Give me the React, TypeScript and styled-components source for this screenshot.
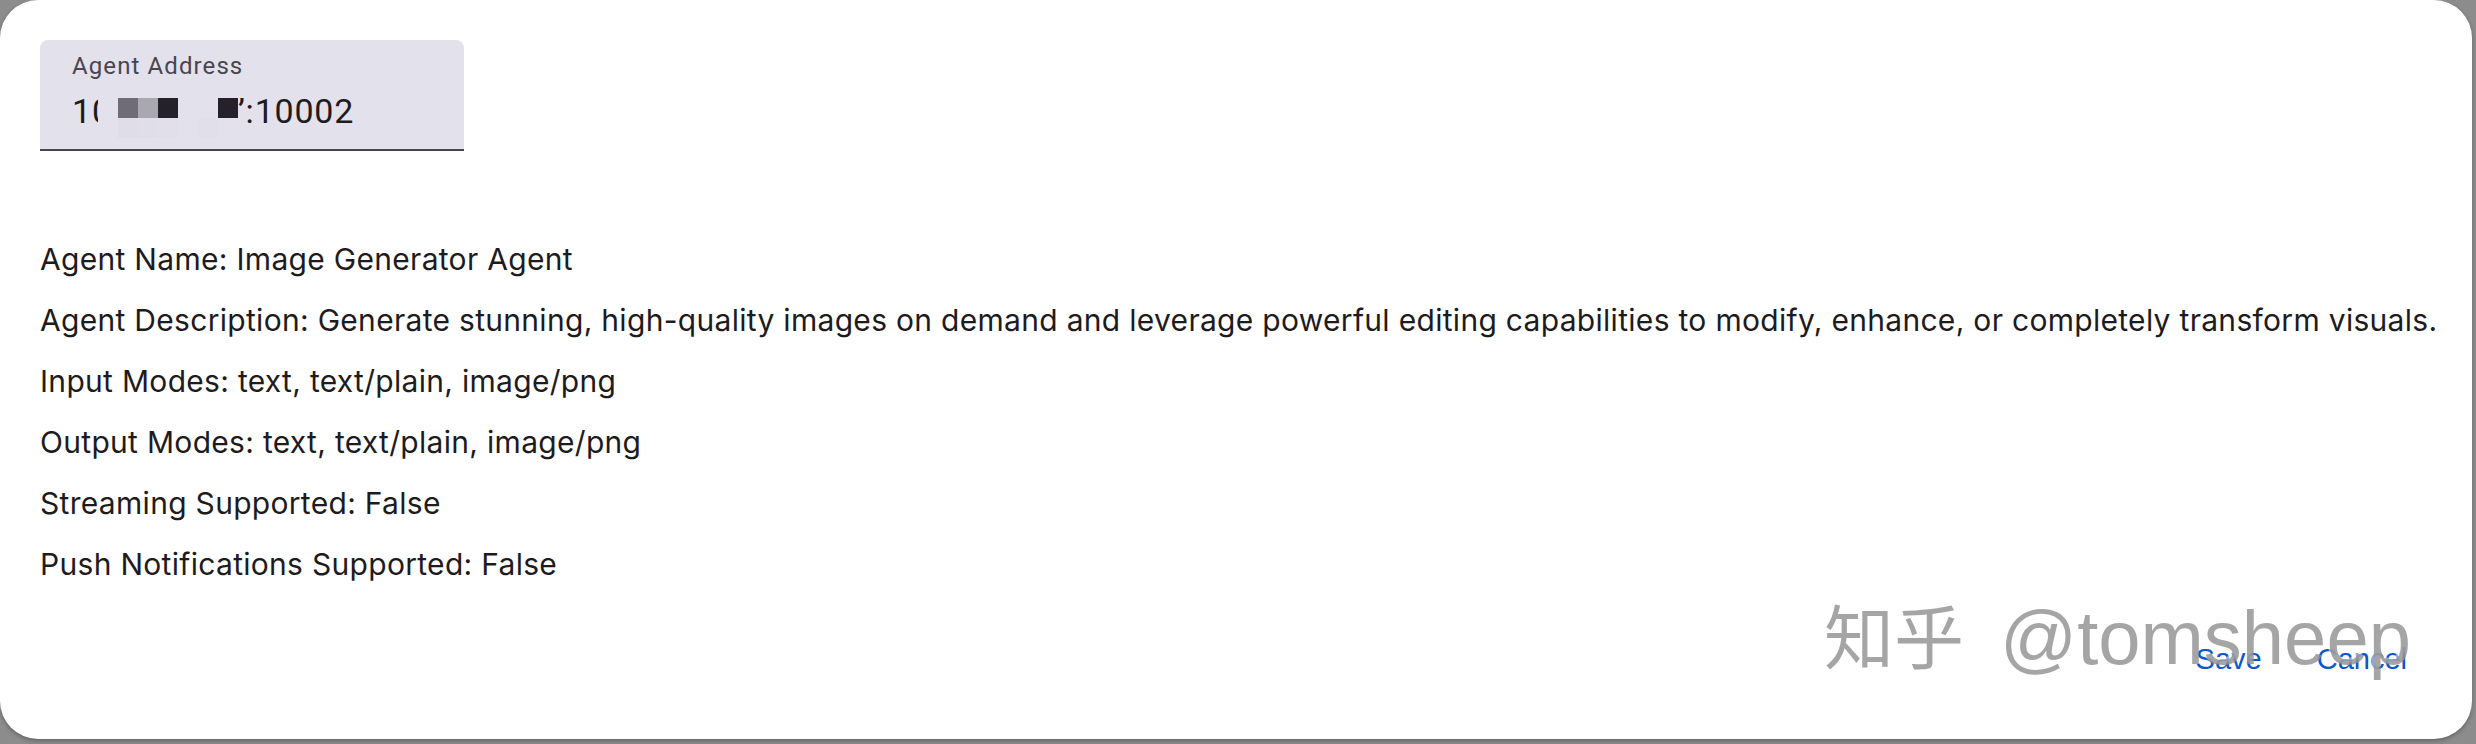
import styled, { createGlobalStyle } from "styled-components"

const GlobalStyle = createGlobalStyle`
  html, body {
    margin: 0;
    padding: 0;
    background: #8c8c8c;
  }

  body {
    width: 2476px;
    height: 744px;
    overflow: hidden;
  }
`

const Dialog = styled.div`
  position: relative;
  box-sizing: border-box;
  display: flex;
  flex-direction: column;
  width: 2472px;
  height: 739px;
  padding: 40px 65px 64px 40px;
  border-radius: 38px;
  background: #ffffff;
  box-shadow: 0 2px 4px rgba(0, 0, 0, 0.28);
`

const Field = styled.div`
  box-sizing: border-box;
  display: flex;
  flex-direction: column;
  width: 424px;
  height: 111px;
  padding: 10px 32px 0;
  border-radius: 8px 8px 0 0;
  border-bottom: 2px solid #49454f;
  background: #e3e1ec;
  font-family: Roboto, "Liberation Sans", sans-serif;
`

const FieldLabel = styled.span`
  font-size: 24px;
  line-height: 32px;
  letter-spacing: 1.1px;
  color: #49454f;
`

const FieldValue = styled.div`
  display: flex;
  align-items: flex-start;
  margin-top: 9px;
  font-size: 34px;
  line-height: 40px;
  letter-spacing: 0.8px;
  color: #1d1b20;
`

const ClippedText = styled.span<{ $width: number }>`
  display: inline-block;
  width: ${(p) => p.$width}px;
  overflow: hidden;
  white-space: nowrap;
`

// pixelated redaction over the middle of the address
const Mosaic = styled.span`
  display: grid;
  grid-template-columns: repeat(6, 20px);
  grid-auto-rows: 20px;
  margin: 7px 0 0 20px;
`

const MosaicCell = styled.span<{ $tone: string }>`
  background: ${(p) => p.$tone};
`

const Details = styled.div`
  display: flex;
  flex-direction: column;
  gap: 21px;
  margin-top: 88px;
  font-family: Inter, Roboto, "Liberation Sans", sans-serif;
  font-size: 30px;
  line-height: 40px;
  letter-spacing: 0.3px;
  color: #1d1b20;
`

const DetailLine = styled.div`
  white-space: nowrap;
`

const Actions = styled.div`
  display: flex;
  justify-content: flex-end;
  gap: 55px;
  margin-top: auto;
`

const TextButton = styled.button`
  padding: 0;
  border: none;
  background: none;
  font-family: "Liberation Sans", Arial, sans-serif;
  font-size: 29px;
  line-height: 32px;
  color: #0b57d0;
  cursor: pointer;
`

const Watermark = styled.div`
  position: absolute;
  left: 1824px;
  top: 600px;
  display: flex;
  align-items: baseline;
  gap: 36px;
  color: rgba(145, 145, 145, 0.82);
  text-shadow: -2px -2px 0 rgba(255, 255, 255, 0.5);
  pointer-events: none;
  white-space: nowrap;
`

const WatermarkText = styled.span<{ $size: number }>`
  font-family: "Liberation Sans", "Noto Sans CJK SC", sans-serif;
  font-size: ${(p) => p.$size}px;
  line-height: 1;
`

const mosaicTones = [
  "#6f6c78",
  "#a9a7b0",
  "#24212a",
  "#e3e1ec",
  "#e3e1ec",
  "#24212a",
  "#dfdde9",
  "#e0dee9",
  "#e1dfea",
  "#e3e1ec",
  "#e1dfeb",
  "#e3e1ec",
]

const details = [
  "Agent Name: Image Generator Agent",
  "Agent Description: Generate stunning, high-quality images on demand and leverage powerful editing capabilities to modify, enhance, or completely transform visuals.",
  "Input Modes: text, text/plain, image/png",
  "Output Modes: text, text/plain, image/png",
  "Streaming Supported: False",
  "Push Notifications Supported: False",
]

export default function App(): JSX.Element {
  return (
    <>
      <GlobalStyle />
      <Dialog>
        <Field>
          <FieldLabel>Agent Address</FieldLabel>
          <FieldValue>
            <ClippedText $width={26}>10</ClippedText>
            <Mosaic>
              {mosaicTones.map((tone, index) => (
                <MosaicCell key={index} $tone={tone} />
              ))}
            </Mosaic>
            <span>’:10002</span>
          </FieldValue>
        </Field>

        <Details>
          {details.map((line) => (
            <DetailLine key={line}>{line}</DetailLine>
          ))}
        </Details>

        <Actions>
          <TextButton>Save</TextButton>
          <TextButton>Cancel</TextButton>
        </Actions>

        <Watermark>
          <WatermarkText $size={70}>知乎</WatermarkText>
          <WatermarkText $size={76}>@tomsheep</WatermarkText>
        </Watermark>
      </Dialog>
    </>
  )
}
